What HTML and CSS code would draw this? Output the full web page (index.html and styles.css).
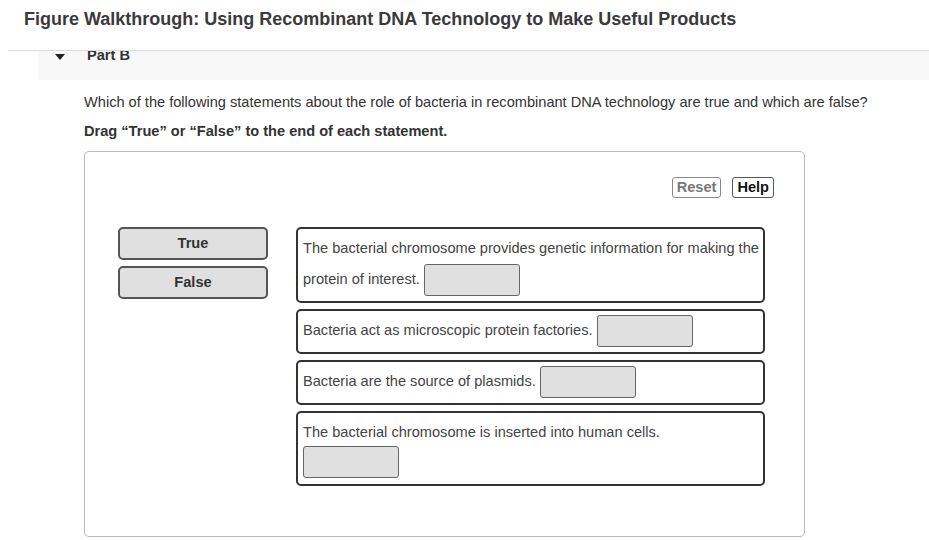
FILE: index.html
```html
<!DOCTYPE html>
<html>
<head>
    <title>Figure Walkthrough: Using Recombinant DNA Technology to Make Useful Products</title>
    <link rel="stylesheet" href="styles.css">
</head>
<body>
    <div class="header">
        <h1>Figure Walkthrough: Using Recombinant DNA Technology to Make Useful Products</h1>
    </div>

    <div class="part-bar">
        <span class="caret"></span>
        <span class="part-title">Part B</span>
    </div>

    <div class="content">
        <p class="question">Which of the following statements about the role of bacteria in recombinant DNA technology are true and which are false?</p>
        <p class="instruction">Drag “True” or “False” to the end of each statement.</p>

        <div class="workspace">
            <div class="toolbar">
                <button class="tool-btn disabled">Reset</button>
                <button class="tool-btn">Help</button>
            </div>

            <div class="board">
                <div class="tiles">
                    <div class="tile">True</div>
                    <div class="tile">False</div>
                </div>

                <div class="statements">
                    <div class="statement">
                        The bacterial chromosome provides genetic information for making the protein of interest. <span class="target"></span>
                    </div>
                    <div class="statement">
                        Bacteria act as microscopic protein factories. <span class="target"></span>
                    </div>
                    <div class="statement">
                        Bacteria are the source of plasmids. <span class="target"></span>
                    </div>
                    <div class="statement stacked">
                        The bacterial chromosome is inserted into human cells. <span class="target"></span>
                    </div>
                </div>
            </div>
        </div>
    </div>
</body>
</html>
```

FILE: styles.css
```css
body {
    font-family: "Liberation Sans", Arial, sans-serif;
    margin: 0;
    color: #333;
    background: #fff;
}
.header {
    margin-left: 8px;
    height: 50px;
    border-bottom: 1px solid #ddd;
}
.header h1 {
    margin: 0;
    padding: 9px 0 0 16px;
    font-size: 18px;
    font-weight: bold;
    color: #3a3a3a;
}
.part-bar {
    margin-left: 38px;
    height: 29px;
    background: #f8f8f8;
    overflow: hidden;
    position: relative;
}
.caret {
    position: absolute;
    left: 17px;
    top: 3px;
    width: 0;
    height: 0;
    border-left: 5px solid transparent;
    border-right: 5px solid transparent;
    border-top: 6px solid #222;
}
.part-title {
    position: absolute;
    left: 49px;
    top: -4px;
    font-size: 14.6px;
    font-weight: bold;
    color: #333;
}
.content {
    padding-left: 84px;
}
.question {
    margin: 14px 0 0;
    font-size: 14.6px;
    line-height: 17px;
    color: #333;
}
.instruction {
    margin: 12px 0 0;
    font-size: 14.6px;
    font-weight: bold;
    line-height: 17px;
    color: #333;
}
.workspace {
    margin-top: 11px;
    width: 719px;
    height: 384px;
    border: 1px solid #bbb;
    border-radius: 5px;
}
.toolbar {
    display: flex;
    justify-content: flex-end;
    gap: 11px;
    padding: 25px 30px 0 0;
}
.tool-btn {
    font-family: "Liberation Sans", Arial, sans-serif;
    font-size: 14.6px;
    font-weight: bold;
    color: #111;
    background: #fff;
    border: 1px solid #555;
    border-radius: 3px;
    padding: 0 4px;
    height: 21px;
    line-height: 19px;
}
.tool-btn.disabled {
    color: #777;
    border-color: #888;
}
.board {
    display: flex;
    gap: 28px;
    margin-top: 29px;
    padding-left: 33px;
}
.tiles {
    display: flex;
    flex-direction: column;
    gap: 6px;
    width: 150px;
}
.tile {
    height: 29px;
    line-height: 29px;
    text-align: center;
    font-size: 14.6px;
    font-weight: bold;
    color: #333;
    background: #e0e0e0;
    border: 2px solid #555;
    border-radius: 5px;
}
.statements {
    display: flex;
    flex-direction: column;
    gap: 6px;
    width: 469px;
}
.statement {
    border: 2px solid #333;
    border-radius: 5px;
    padding: 4px 3px 5px 5px;
    font-size: 14.6px;
    line-height: 31px;
    color: #444;
}
.target {
    display: inline-block;
    box-sizing: border-box;
    vertical-align: middle;
    width: 96px;
    height: 32px;
    background: #e0e0e0;
    border: 1.5px solid #666;
    border-radius: 3px;
}
.stacked .target {
    display: block;
    margin: -2px 0 1px;
}
```
